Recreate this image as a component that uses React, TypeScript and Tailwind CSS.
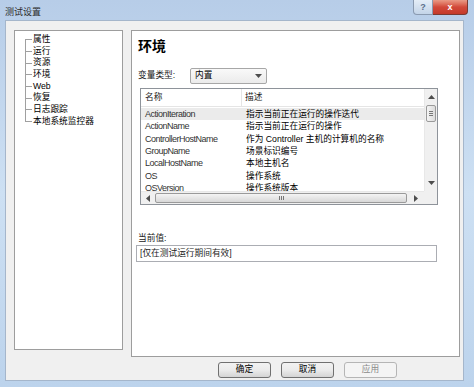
import React from "react";

const treeItems = ["属性", "运行", "资源", "环境", "Web", "恢复", "日志跟踪", "本地系统监控器"];
const rows: [string, string][] = [
  ["ActionIteration", "指示当前正在运行的操作迭代"],
  ["ActionName", "指示当前正在运行的操作"],
  ["ControllerHostName", "作为 Controller 主机的计算机的名称"],
  ["GroupName", "场景标识编号"],
  ["LocalHostName", "本地主机名"],
  ["OS", "操作系统"],
  ["OSVersion", "操作系统版本"],
];

function Tri({ dir }: { dir: "up" | "down" | "left" | "right" }) {
  const pts =
    dir === "up" ? "0,4 3.5,0 7,4" : dir === "down" ? "0,0 3.5,4 7,0" : dir === "left" ? "4,0 0,3.5 4,7" : "0,0 4,3.5 0,7";
  const w = dir === "up" || dir === "down" ? 7 : 4;
  const h = dir === "up" || dir === "down" ? 4 : 7;
  return (
    <svg width={w} height={h} viewBox={`0 0 ${w} ${h}`}>
      <polygon points={pts} fill="#4d4d4d" />
    </svg>
  );
}

export default function App() {
  return (
    <div className="w-[474px] h-[387px] overflow-hidden flex flex-col bg-gradient-to-b from-[#b7cde8] via-[#cde0f3] to-[#bcd3ec] font-['Liberation_Sans','Noto_Sans_CJK_SC',sans-serif]">
      {/* title bar */}
      <div className="h-[20px] flex items-start shrink-0">
        <span className="ml-[5px] mt-[6px] text-[9px] leading-[12px] text-[#2b2b2b] font-['Noto_Sans_CJK_SC',sans-serif]">测试设置</span>
        <div className="ml-auto mr-[6px] flex">
          <div className="w-[20px] h-[15px] flex items-center justify-center rounded-bl-[4px] border border-t-0 border-[#8a9ab0] bg-gradient-to-b from-[#e4edf7] to-[#c3d4e8] text-[9px] font-bold text-[#5a6e8a] leading-none">?</div>
          <div className="w-[35px] h-[15px] flex items-center justify-center rounded-br-[4px] border border-t-0 border-l-0 border-[#7a3a32] bg-gradient-to-b from-[#e99a86] via-[#d2493a] to-[#c43a2a] text-[9px] font-bold text-white leading-none">x</div>
        </div>
      </div>
      {/* content */}
      <div className="ml-[5px] w-[459px] h-[361px] shrink-0 bg-[#f0f0f0] border border-[#a5b6cb] flex flex-col">
        <div className="flex items-start mt-[9px] ml-[8px] gap-[8px]">
          {/* tree */}
          <div className="w-[109px] h-[320px] bg-white border border-[#9d9d9d] pt-[3px] pl-[10px]">
            {treeItems.map((t, i) => (
              <div key={t} className="flex h-[11.7px] items-stretch">
                <div className="w-[7px] flex flex-col">
                  <div className={`flex-1 border-b border-[#a0a0a0] ${i > 0 ? "border-l" : ""}`} />
                  <div className={`flex-1 ${i < treeItems.length - 1 ? "border-l border-[#a0a0a0]" : ""}`} />
                </div>
                <span className="ml-[1px] text-[8.7px] leading-[11.7px] text-black whitespace-nowrap">{t}</span>
              </div>
            ))}
          </div>
          {/* right panel */}
          <div className="w-[329px] h-[327px] bg-white border border-[#9d9d9d] flex flex-col">
            <div className="ml-[6px] mt-[5px] h-[18px] text-[14px] leading-[18px] font-bold text-black font-['Noto_Sans_CJK_SC',sans-serif]">环境</div>
            <div className="mt-[14px] ml-[6px] flex items-center h-[16px]">
              <span className="w-[52px] text-[8.7px] text-[#222]">变量类型:</span>
              <div className="w-[77px] h-[16px] border border-[#a7a7a7] rounded-[2px] bg-gradient-to-b from-[#f9f9f9] to-[#ebebeb] flex items-center pl-[4px] pr-[4px]">
                <span className="text-[8.7px] text-black">内置</span>
                <span className="ml-auto flex items-center"><Tri dir="down" /></span>
              </div>
            </div>
            {/* table */}
            <div className="mt-[4px] ml-[8px] w-[298px] h-[117px] border border-[#8e939a] flex flex-col">
              <div className="flex h-[102px]">
                <div className="w-[283px] overflow-hidden flex flex-col">
                  <div className="h-[18px] shrink-0 flex items-center border-b border-[#e5e5e5]">
                    <div className="w-[101px] h-full flex items-center pl-[4px] border-r border-[#e5e5e5] text-[8.7px] text-[#222]">名称</div>
                    <div className="pl-[3px] text-[8.7px] text-[#222]">描述</div>
                  </div>
                  <div className="h-[1px] shrink-0" />
                  {rows.map(([n, d], i) => (
                    <div key={n} className={`h-[12.3px] shrink-0 flex items-center ${i === 0 ? "bg-[#ebebeb]" : ""}`}>
                      <div className="w-[101px] pl-[4px] text-[9px] tracking-[-0.5px] text-[#333] whitespace-nowrap leading-[12px]">{n}</div>
                      <div className="pl-[4px] text-[8.7px] text-black whitespace-nowrap leading-[12px]">{d}</div>
                    </div>
                  ))}
                </div>
                {/* vscroll */}
                <div className="w-[13px] h-full bg-[#f0f0f0] border-l border-[#e8e8e8] flex flex-col items-center">
                  <div className="h-[16px] flex items-center justify-center"><Tri dir="up" /></div>
                  <div className="w-[10px] h-[17px] rounded-[2px] border border-[#9a9a9a] bg-gradient-to-r from-[#f4f4f4] to-[#dcdcdc] flex flex-col items-center justify-center gap-[1px]">
                    <div className="w-[4px] h-px bg-[#777]" />
                    <div className="w-[4px] h-px bg-[#777]" />
                    <div className="w-[4px] h-px bg-[#777]" />
                  </div>
                  <div className="flex-1" />
                  <div className="h-[16px] flex items-center justify-center"><Tri dir="down" /></div>
                </div>
              </div>
              <div className="flex h-[13px]">
                <div className="w-[283px] h-full bg-[#f0f0f0] border-t border-[#e8e8e8] flex items-center">
                  <div className="w-[14px] flex items-center justify-center"><Tri dir="left" /></div>
                  <div className="w-[252px] h-[10px] rounded-[2px] border border-[#9a9a9a] bg-gradient-to-b from-[#f4f4f4] to-[#d8d8d8] flex items-center justify-center gap-[1px]">
                    <div className="w-px h-[4px] bg-[#777]" />
                    <div className="w-px h-[4px] bg-[#777]" />
                    <div className="w-px h-[4px] bg-[#777]" />
                  </div>
                  <div className="flex-1 flex items-center justify-center"><Tri dir="right" /></div>
                </div>
                <div className="w-[13px] h-full bg-[#f0f0f0]" />
              </div>
            </div>
            <div className="mt-[27px] ml-[6px] h-[12px] text-[8.7px] leading-[12px] text-[#222]">当前值:</div>
            <div className="mt-[1px] ml-[4px] w-[301px] h-[17px] border border-[#abadb3] bg-white flex items-center pl-[3px]">
              <span className="text-[8.7px] text-[#222] whitespace-nowrap">[仅在测试运行期间有效]</span>
            </div>
          </div>
        </div>
        {/* buttons */}
        <div className="mt-[5px] flex justify-end pr-[66px] gap-[10px]">
          <div className="w-[53px] h-[16px] rounded-[3px] border border-[#707070] bg-gradient-to-b from-[#f2f2f2] via-[#ebebeb] to-[#d4d4d4] flex items-center justify-center text-[8.7px] text-black">确定</div>
          <div className="w-[53px] h-[16px] rounded-[3px] border border-[#707070] bg-gradient-to-b from-[#f2f2f2] via-[#ebebeb] to-[#d4d4d4] flex items-center justify-center text-[8.7px] text-black">取消</div>
          <div className="w-[53px] h-[16px] rounded-[3px] border border-[#b5b5b5] bg-[#f4f4f4] flex items-center justify-center text-[8.7px] text-[#8a8a8a]">应用</div>
        </div>
      </div>
    </div>
  );
}
